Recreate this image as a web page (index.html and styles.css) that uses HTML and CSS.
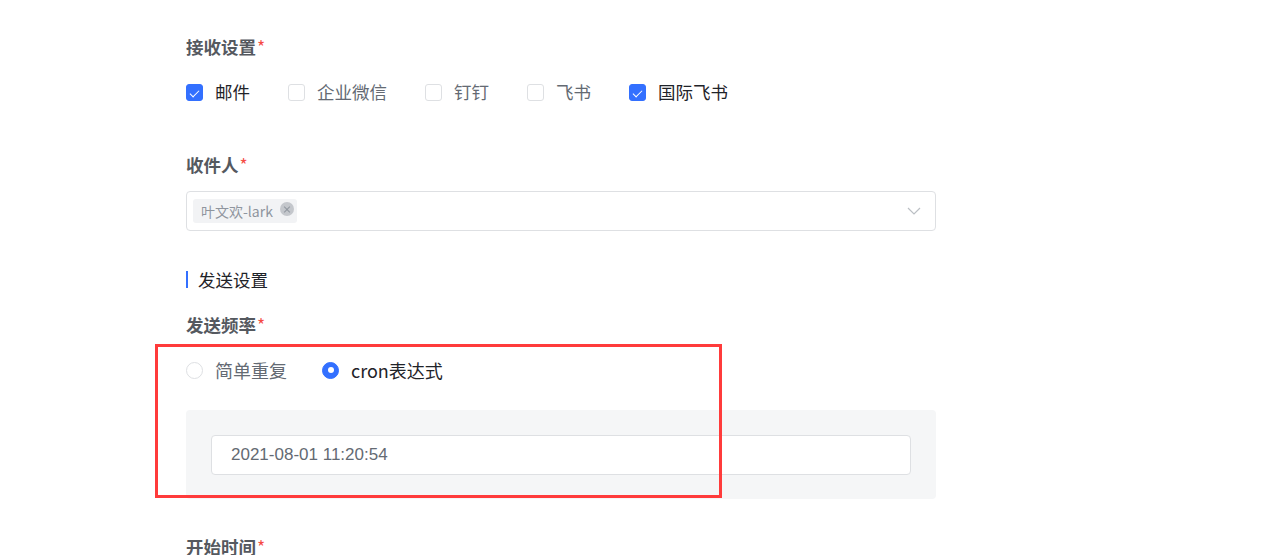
FILE: index.html
```html
<!DOCTYPE html>
<html lang="zh-CN">
  <head>
    <meta charset="UTF-8" />
    <meta name="viewport" content="width=device-width, initial-scale=1.0" />
    <title>订阅设置</title>
    <link rel="stylesheet" href="styles.css">
  </head>
  <body>
    <div class="page">
      <form class="form">
        <div class="form-item item-receive">
          <div class="form-label">接收设置<span class="required">*</span></div>
          <div class="check-group">
            <label class="check checked"><span class="check-box"></span>邮件</label>
            <label class="check"><span class="check-box"></span>企业微信</label>
            <label class="check"><span class="check-box"></span>钉钉</label>
            <label class="check"><span class="check-box"></span>飞书</label>
            <label class="check checked"><span class="check-box"></span>国际飞书</label>
          </div>
        </div>

        <div class="form-item item-user">
          <div class="form-label label-tight">收件人<span class="required">*</span></div>
          <div class="select">
            <span class="tag">叶文欢-lark<span class="tag-close"></span></span>
            <svg class="select-arrow" width="14" height="8" viewBox="0 0 14 8">
              <path d="M1 1l6 6 6-6" fill="none" stroke="#bbbfc4" stroke-width="1.2" />
            </svg>
          </div>
        </div>

        <div class="section-title">发送设置</div>

        <div class="form-item item-freq">
          <div class="form-label">发送频率<span class="required">*</span></div>
          <div class="radio-group">
            <label class="radio"><span class="radio-dot"></span>简单重复</label>
            <label class="radio checked"><span class="radio-dot"></span>cron表达式</label>
          </div>
          <div class="panel">
            <div class="input">2021-08-01 11:20:54</div>
          </div>
        </div>

        <div class="form-item">
          <div class="form-label">开始时间<span class="required">*</span></div>
        </div>
      </form>

      <!-- annotation box from the screenshot -->
      <div class="highlight"></div>
    </div>
  </body>
</html>
```

FILE: styles.css
```css
* {
  box-sizing: border-box;
}

body {
  margin: 0;
  background: #fff;
  font-family: "Noto Sans CJK SC", "Liberation Sans", sans-serif;
  color: #1f2329;
}

.page {
  position: relative;
  height: 555px;
  overflow: hidden;
}

.form {
  width: 750px;
  margin-left: 186px;
  padding-top: 35px;
}

.form-label {
  font-size: 17.5px;
  line-height: 24px;
  font-weight: bold;
  color: #55595f;
  margin-bottom: 21px;
}

.label-tight {
  margin-bottom: 14px;
}

.required {
  color: #f54a45;
  font-weight: normal;
  margin-left: 1px;
}

.item-receive {
  margin-bottom: 49px;
}

.item-user {
  margin-bottom: 37px;
}

.item-freq {
  margin-bottom: 36px;
}

/* checkbox */
.check-group,
.radio-group {
  display: flex;
  align-items: center;
  height: 24px;
}

.check,
.radio {
  display: flex;
  align-items: center;
  font-size: 17.5px;
  line-height: 24px;
  color: #646a73;
  margin-right: 38px;
}

.check.checked,
.radio.checked {
  color: #1f2329;
}

.check-box {
  position: relative;
  width: 17px;
  height: 17px;
  border: 1px solid #dee0e3;
  border-radius: 3px;
  margin-right: 12px;
  background: #fff;
}

.check.checked .check-box {
  background: #3370ff;
  border-color: #3370ff;
}

.check.checked .check-box::after {
  content: "";
  position: absolute;
  left: 5px;
  top: 3px;
  width: 4px;
  height: 8px;
  border: solid #fff;
  border-width: 0 1.5px 1.5px 0;
  transform: rotate(45deg);
}

/* radio */
.radio {
  font-size: 18px;
  margin-right: 35px;
}

.radio-dot {
  position: relative;
  width: 17px;
  height: 17px;
  border: 1px solid #dee0e3;
  border-radius: 50%;
  margin-right: 12px;
  background: #fff;
}

.radio.checked .radio-dot {
  background: #3370ff;
  border-color: #3370ff;
}

.radio.checked .radio-dot::after {
  content: "";
  position: absolute;
  left: 50%;
  top: 50%;
  width: 6px;
  height: 6px;
  margin: -3px 0 0 -3px;
  border-radius: 50%;
  background: #fff;
}

/* select */
.select {
  display: flex;
  align-items: center;
  height: 40px;
  padding: 0 14px 0 6px;
  border: 1px solid #dee0e3;
  border-radius: 4px;
}

.tag {
  display: flex;
  align-items: center;
  height: 24px;
  padding: 0 3px 0 8px;
  background: #f2f3f5;
  border-radius: 3px;
  font-size: 14px;
  color: #8f959e;
}

.tag-close {
  position: relative;
  width: 14px;
  height: 14px;
  margin-left: 7px;
  margin-top: -4px;
  border-radius: 50%;
  background: #c4c7cc;
}

.tag-close::before,
.tag-close::after {
  content: "";
  position: absolute;
  left: 3px;
  top: 6.5px;
  width: 8px;
  height: 1px;
  background: #8f959e;
  transform: rotate(45deg);
}

.tag-close::after {
  transform: rotate(-45deg);
}

.select-arrow {
  margin-left: auto;
}

/* section title */
.section-title {
  position: relative;
  display: flex;
  align-items: center;
  height: 24px;
  line-height: 24px;
  padding-left: 12px;
  font-size: 17.5px;
  color: #1f2329;
  margin-bottom: 21px;
}

.section-title::before {
  content: "";
  position: absolute;
  left: 0;
  top: 3px;
  width: 2px;
  height: 17px;
  background: #3370ff;
}

/* cron panel */
.radio-group {
  margin-bottom: 28px;
}

.panel {
  height: 89px;
  padding: 25px 25px 0;
  background: #f5f6f7;
  border-radius: 4px;
}

.input {
  height: 40px;
  line-height: 38px;
  padding-left: 19px;
  background: #fff;
  border: 1px solid #dee0e3;
  border-radius: 4px;
  font-family: "Liberation Sans", "Noto Sans CJK SC", sans-serif;
  font-size: 17px;
  color: #646a73;
}

.highlight {
  position: absolute;
  left: 155px;
  top: 344px;
  width: 567px;
  height: 154px;
  border: 3px solid #ff3b3b;
}
```
